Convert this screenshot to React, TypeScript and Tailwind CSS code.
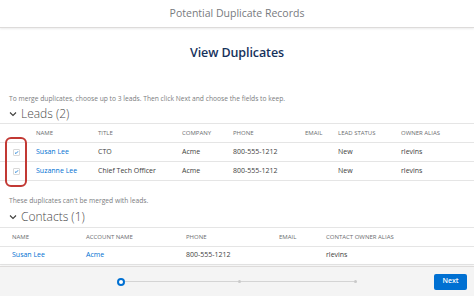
import React from "react";

const font = { fontFamily: '"Open Sans", "Liberation Sans", sans-serif' };

function Check() {
  return (
    <div className="w-[7px] h-[7px] border border-[#d8d8d8] rounded-[1px] bg-white flex items-center justify-center">
      <svg width="5" height="5" viewBox="0 0 6 6">
        <path d="M1.2 3.2 L2.4 4.3 L4.8 1.6" stroke="#0070d2" strokeWidth="1" fill="none" />
      </svg>
    </div>
  );
}

function Chevron() {
  return (
    <svg width="8" height="6" viewBox="0 0 8 6" className="mr-[4px]">
      <path d="M1 1.5 L4 4.5 L7 1.5" stroke="#3e3e3c" strokeWidth="1.1" fill="none" />
    </svg>
  );
}

export default function App() {
  const leadCols = "grid-cols-[36px_62px_84px_51px_72px_33px_63px_1fr]";
  const contactCols = "grid-cols-[74px_100px_93px_47px_1fr]";
  return (
    <div className="w-[474px] h-[296px] bg-white flex flex-col overflow-hidden relative" style={font}>
      <div className="h-[28px] flex items-center justify-center text-[10.5px] text-[#777a7e] border-b border-[#dddbda] shadow-[0_1px_2px_rgba(0,0,0,0.08)]">
        Potential Duplicate Records
      </div>
      <div className="mt-[16px] h-[18px] flex items-center justify-center text-[12.5px] font-semibold text-[#16325c] tracking-[-0.1px]">
        View Duplicates
      </div>
      <div className="mt-[32px] h-[10px] pl-[9px] flex items-center text-[6.7px] text-[#7b7d80]">
        To merge duplicates, choose up to 3 leads. Then click Next and choose the fields to keep.
      </div>
      <div className="mt-[3px] h-[14px] pl-[9px] flex items-center text-[12px] text-[#4a4a4a] font-light">
        <Chevron />
        Leads (2)
      </div>
      <div className="mt-[2px] text-[7px] text-[#3e3e3c]">
        <div className={`grid ${leadCols} h-[20px] items-center border-t border-b border-[#e5e5e5] text-[6px] text-[#6b6d70] uppercase`}>
          <div />
          <div>Name</div>
          <div>Title</div>
          <div>Company</div>
          <div>Phone</div>
          <div>Email</div>
          <div>Lead Status</div>
          <div>Owner Alias</div>
        </div>
        {[
          ["Susan Lee", "CTO"],
          ["Suzanne Lee", "Chief Tech Officer"],
        ].map(([n, t]) => (
          <div key={n} className={`grid ${leadCols} h-[19px] items-center border-b border-[#e5e5e5]`}>
            <div className="pl-[13px]"><Check /></div>
            <div className="text-[#0070d2]">{n}</div>
            <div>{t}</div>
            <div>Acme</div>
            <div>800-555-1212</div>
            <div />
            <div>New</div>
            <div>rlevins</div>
          </div>
        ))}
      </div>
      <div className="mt-[15px] h-[10px] pl-[9px] flex items-center text-[6.7px] text-[#7b7d80]">
        These duplicates can't be merged with leads.
      </div>
      <div className="mt-[4px] h-[14px] pl-[9px] flex items-center text-[12px] text-[#4a4a4a] font-light">
        <Chevron />
        Contacts (1)
      </div>
      <div className="mt-[3px] text-[7px] text-[#3e3e3c]">
        <div className={`grid ${contactCols} h-[20px] items-center border-t border-b border-[#e5e5e5] text-[6px] text-[#6b6d70] uppercase pl-[12px]`}>
          <div>Name</div>
          <div>Account Name</div>
          <div>Phone</div>
          <div>Email</div>
          <div>Contact Owner Alias</div>
        </div>
        <div className={`grid ${contactCols} h-[18px] items-center border-b border-[#e5e5e5] pl-[12px]`}>
          <div className="text-[#0070d2]">Susan Lee</div>
          <div className="text-[#0070d2]">Acme</div>
          <div>800-555-1212</div>
          <div />
          <div>rlevins</div>
        </div>
      </div>
      <div className="mt-[1px] flex-1 bg-[#f4f4f4] border-t border-[#dddbda] shadow-[0_-1px_2px_rgba(0,0,0,0.06)] flex items-center pl-[117px] pr-[7px]">
        <div className="flex items-center w-[240px]">
          <div className="w-[8px] h-[8px] rounded-full border-[2px] border-[#0070d2] bg-white shrink-0" />
          <div className="flex-1 h-[1px] bg-[#d4d4d4]" />
          <div className="w-[3px] h-[3px] rounded-full bg-[#c9c9c9] shrink-0" />
          <div className="flex-1 h-[1px] bg-[#d4d4d4]" />
          <div className="w-[3px] h-[3px] rounded-full bg-[#c9c9c9] shrink-0" />
        </div>
        <div className="ml-auto w-[33px] h-[16px] rounded-[2px] bg-[#0070d2] text-white text-[7px] font-semibold flex items-center justify-center">
          Next
        </div>
      </div>
      <div className="absolute left-[5px] top-[137px] w-[22px] h-[50px] border-[2px] border-[#c23934] rounded-[6px]" />
    </div>
  );
}
